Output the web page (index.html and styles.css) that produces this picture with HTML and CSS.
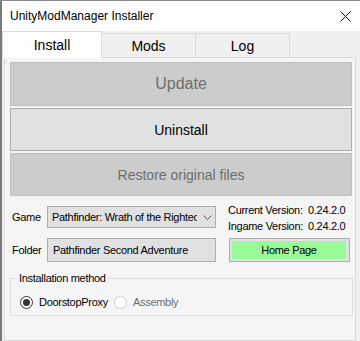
FILE: index.html
```html
<!DOCTYPE html>
<html>
<head>
<meta charset="utf-8">
<link rel="stylesheet" href="styles.css">
</head>
<body>
<div class="window">
  <div class="titlebar">
    <span class="title">UnityModManager Installer</span>
    <svg class="close" width="11" height="11" viewBox="0 0 11 11"><path d="M0.5 0.5L10.5 10.5M10.5 0.5L0.5 10.5" stroke="#111" stroke-width="1" fill="none"/></svg>
  </div>
  <div class="tabs">
    <div class="tab active">Install</div>
    <div class="tab">Mods</div>
    <div class="tab">Log</div>
  </div>
  <div class="page">
    <div class="buttons">
      <div class="btn big disabled">Update</div>
      <div class="btn">Uninstall</div>
      <div class="btn disabled">Restore original files</div>
    </div>
    <div class="form">
      <span class="label label-game">Game</span>
      <div class="combo">
        <span class="combo-text">Pathfinder: Wrath of the Righteous</span>
        <span class="combo-arrow"><svg width="9" height="5" viewBox="0 0 9 5"><path d="M0.5 0.5L4.5 4.5L8.5 0.5" stroke="#555" stroke-width="1" fill="none"/></svg></span>
      </div>
      <div class="versions">
        <span class="v-label">Current Version:</span><span class="v-value">0.24.2.0</span>
        <span class="v-label">Ingame Version:</span><span class="v-value">0.24.2.0</span>
      </div>
      <span class="label label-folder">Folder</span>
      <div class="textbox">Pathfinder Second Adventure</div>
      <div class="home"><div class="home-inner">Home Page</div></div>
    </div>
    <fieldset class="group">
      <legend>Installation method</legend>
      <div class="radios">
        <div class="radio-item first"><span class="radio checked"></span><span>DoorstopProxy</span></div>
        <div class="radio-item disabled"><span class="radio"></span><span>Assembly</span></div>
      </div>
    </fieldset>
  </div>
</div>
</body>
</html>
```
FILE: styles.css
```css
* { box-sizing: border-box; }
html, body { margin: 0; padding: 0; }
body {
  width: 360px;
  height: 341px;
  overflow: hidden;
  background: #f0f0f0;
  font-family: "Liberation Sans", Arial, sans-serif;
  color: #000;
}
.window {
  height: 341px;
  border-top: 1px solid #8c8c8c;
  border-left: 2px solid #7a7a7a;
  background: #f0f0f0;
  display: flex;
  flex-direction: column;
}
.titlebar {
  height: 30px;
  flex: none;
  background: #fff;
  display: flex;
  align-items: center;
  padding: 0 9px 0 8px;
  font-size: 12px;
}
.close { margin-left: auto; display: block; }
.tabs {
  height: 27px;
  flex: none;
  display: flex;
  align-items: flex-end;
  position: relative;
  z-index: 1;
  margin-bottom: -1px;
}
.tab {
  width: 95px;
  height: 24px;
  margin-left: -1px;
  margin-bottom: 1px;
  border: 1px solid #d9d9d9;
  border-bottom: none;
  background: #f0f0f0;
  display: flex;
  align-items: center;
  justify-content: center;
  font-size: 14px;
}
.tab.active {
  width: 100px;
  height: 27px;
  margin-left: 0;
  margin-bottom: 0;
  background: #fff;
  position: relative;
  z-index: 2;
}
.page {
  margin-left: 2px;
  width: 352px;
  flex: 1;
  border: 1px solid #dadada;
  background: #f5f5f5;
  padding: 4px 3px 0 5px;
}
.buttons {
  display: flex;
  flex-direction: column;
  gap: 2px;
}
.btn {
  height: 43px;
  border: 1px solid #adadad;
  background: #e1e1e1;
  display: flex;
  align-items: center;
  justify-content: center;
  font-size: 14px;
  color: #000;
}
.btn.big { height: 44px; font-size: 16px; }
.btn.disabled {
  background: #cccccc;
  border-color: #bfbfbf;
  color: #6d6d6d;
}
.form {
  margin-top: 6px;
  display: grid;
  grid-template-columns: 37px 169px 136px;
  grid-template-rows: 32px 24px;
  column-gap: 0;
  row-gap: 4px;
  font-size: 11px;
  letter-spacing: -0.3px;
}
.label {
  padding-left: 2px;
  line-height: 22px;
}
.label-game { margin-top: 4px; height: 22px; }
.label-folder { line-height: 24px; }
.combo {
  margin-top: 4px;
  height: 22px;
  border: 1px solid #adadad;
  background: #e1e1e1;
  display: flex;
  align-items: center;
  padding-left: 4px;
}
.combo-text {
  flex: 1;
  overflow: hidden;
  white-space: nowrap;
  min-width: 0;
}
.combo-arrow {
  flex: none;
  width: 18px;
  padding-left: 6px;
  display: flex;
  align-items: center;
}
.combo-arrow svg { display: block; }
.versions {
  margin-left: 12px;
  display: grid;
  grid-template-columns: 80px auto;
  line-height: 16px;
}
.textbox {
  height: 24px;
  border: 1px solid #adadad;
  background: #e1e1e1;
  padding-left: 5px;
  line-height: 22px;
  white-space: nowrap;
  overflow: hidden;
}
.home {
  margin-left: 13px;
  width: 121px;
  height: 24px;
  border: 1px solid #adadad;
  background: #e1e1e1;
  padding: 2px 3px 2px 2px;
}
.home-inner {
  height: 100%;
  background: #98fb98;
  display: flex;
  align-items: center;
  justify-content: center;
}
.group {
  margin: 10px 0 0 0;
  width: 343px;
  min-inline-size: 0;
  border: 1px solid #dcdcdc;
  padding: 9px 6px 5px 6px;
  font-size: 11px;
  letter-spacing: -0.3px;
}
.group legend {
  padding: 0 2px;
  line-height: 13px;
}
.radios {
  display: flex;
  align-items: center;
  height: 16px;
}
.radio-item {
  display: flex;
  align-items: center;
  gap: 6px;
}
.radio-item.first { width: 94px; margin-left: 3px; }
.radio-item.disabled { color: #6d6d6d; }
.radio {
  width: 13px;
  height: 13px;
  border-radius: 50%;
  border: 1px solid #333;
  background: #fff;
  display: flex;
  align-items: center;
  justify-content: center;
  flex: none;
}
.radio.checked::after {
  content: "";
  width: 7px;
  height: 7px;
  border-radius: 50%;
  background: #333;
}
.radio-item.disabled .radio { border-color: #cccccc; }
```
